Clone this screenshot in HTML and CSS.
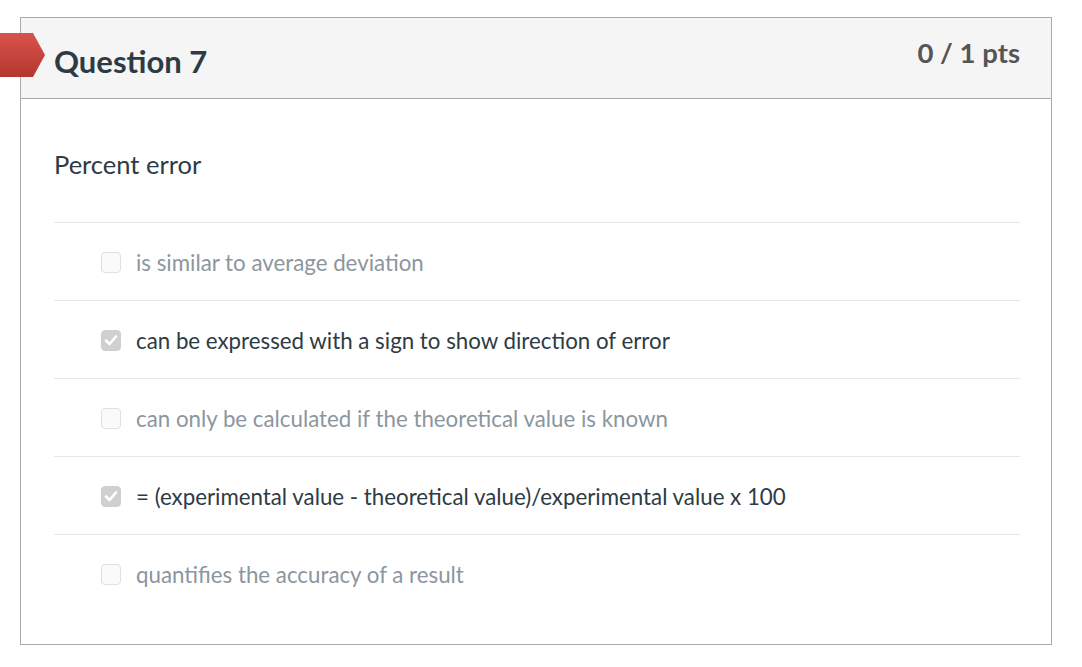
FILE: index.html
```html
<!DOCTYPE html>
<html lang="en">
<head>
<meta charset="utf-8">
<title>Question 7</title>
<link rel="stylesheet" href="styles.css">
</head>
<body>
<div class="question">
  <div class="flag"></div>
  <div class="question-header">
    <h2 class="question-title">Question 7</h2>
    <span class="question-points">0 / 1 pts</span>
  </div>
  <div class="question-body">
    <div class="question-text">Percent error</div>
    <div class="answers">
      <div class="answer">
        <span class="checkbox"></span>
        <span class="answer-label">is similar to average deviation</span>
      </div>
      <div class="answer selected">
        <span class="checkbox checked"><svg viewBox="0 0 20 20" width="20" height="20"><path d="M5 10.5 L8.5 14 L15 6.5" fill="none" stroke="#fff" stroke-width="2.6" stroke-linecap="round" stroke-linejoin="round"/></svg></span>
        <span class="answer-label">can be expressed with a sign to show direction of error</span>
      </div>
      <div class="answer">
        <span class="checkbox"></span>
        <span class="answer-label">can only be calculated if the theoretical value is known</span>
      </div>
      <div class="answer selected">
        <span class="checkbox checked"><svg viewBox="0 0 20 20" width="20" height="20"><path d="M5 10.5 L8.5 14 L15 6.5" fill="none" stroke="#fff" stroke-width="2.6" stroke-linecap="round" stroke-linejoin="round"/></svg></span>
        <span class="answer-label">= (experimental value - theoretical value)/experimental value x 100</span>
      </div>
      <div class="answer">
        <span class="checkbox"></span>
        <span class="answer-label">quantifies the accuracy of a result</span>
      </div>
    </div>
  </div>
</div>
</body>
</html>
```
FILE: styles.css
```css
html, body {
  margin: 0;
  padding: 0;
  background: #fff;
}

body {
  font-family: Lato, "Open Sans", sans-serif;
  color: #2d3b45;
}

.question {
  position: relative;
  box-sizing: border-box;
  width: 1032px;
  height: 628px;
  margin: 17px 0 0 20px;
  border: 1px solid #aaaaaa;
}

/* red marker that sticks out past the card's left edge */
.flag {
  position: absolute;
  left: -21px;
  top: 15px;
  width: 45px;
  height: 44px;
  background: linear-gradient(#d9534b, #b3372f);
  clip-path: polygon(0 0, 33px 0, 45px 22px, 33px 44px, 0 44px);
}

.question-header {
  display: flex;
  justify-content: space-between;
  align-items: flex-start;
  height: 80px;
  padding: 0 31px 0 33px;
  background: #f5f5f5;
  border-bottom: 1px solid #aaaaaa;
}

.question-title {
  margin: 25px 0 0;
  font-size: 31px;
  font-weight: 700;
  line-height: 36px;
  color: #2d3b45;
}

.question-points {
  margin-top: 19px;
  font-size: 27.5px;
  font-weight: 700;
  line-height: 32px;
  color: #555555;
}

.question-body {
  padding: 47px 31px 0 33px;
}

.question-text {
  font-size: 25.5px;
  line-height: 36px;
  margin-bottom: 40px;
}

.answer {
  display: flex;
  align-items: center;
  height: 78px;
  box-sizing: border-box;
  padding: 1px 0 0 47px;
  border-top: 1px solid #e6e6e6;
  font-size: 22.3px;
  color: #8b969e;
}

.answer.selected {
  color: #2d3b45;
}

.checkbox {
  box-sizing: border-box;
  width: 20px;
  height: 21px;
  margin-right: 15px;
  border: 1.5px solid #e0e0e0;
  border-radius: 4px;
  background: #fafafa;
  flex-shrink: 0;
}

.checkbox.checked {
  border-color: #cfcfcf;
  background: #d0d0d0;
}

.checkbox svg {
  display: block;
  margin: -1px;
}
```
